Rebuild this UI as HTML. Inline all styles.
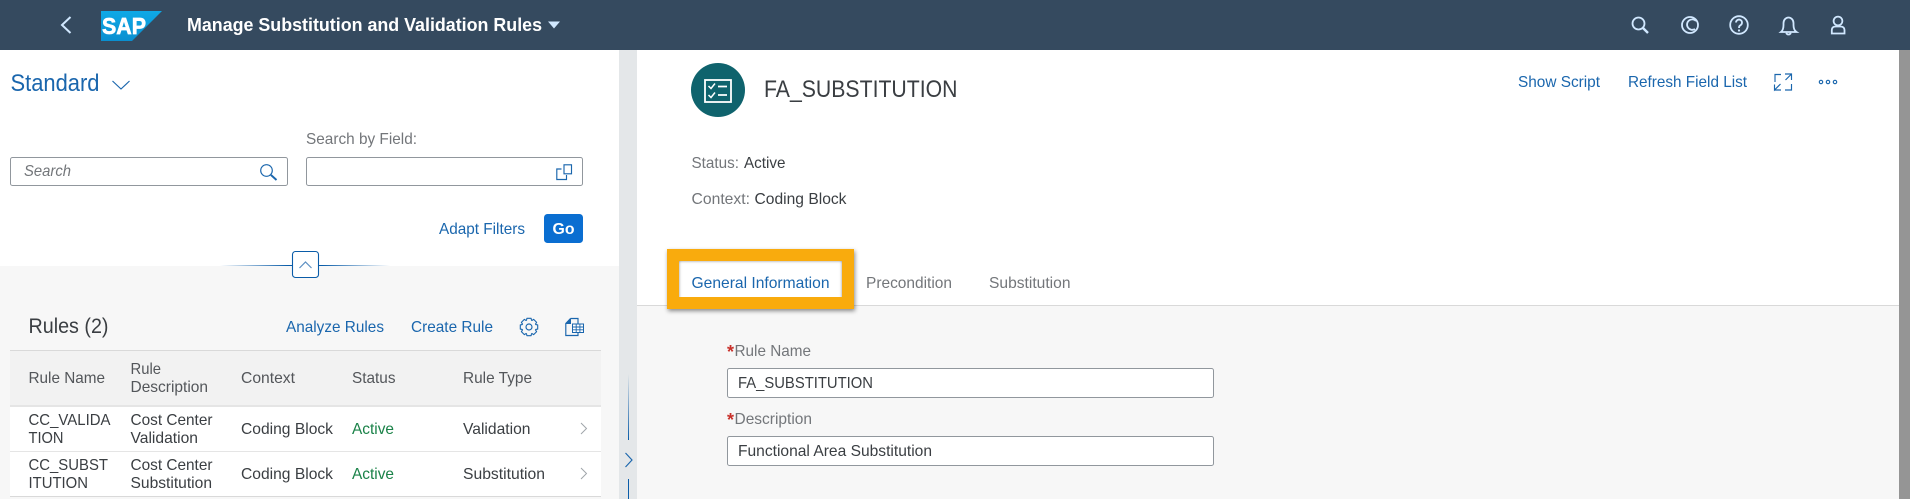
<!DOCTYPE html>
<html><head><meta charset="utf-8"><style>
html,body{margin:0;padding:0;width:1910px;height:499px;overflow:hidden;background:#fff}
svg{display:block}
text{font-family:"Liberation Sans",sans-serif;font-size:16px;fill:#3a3e42}
.l{fill:#1a66ad}.g{fill:#73767a}
.ic{fill:none;stroke:#1a66ad;stroke-width:1.15}
.hi{fill:none;stroke:#d1e8ff;stroke-width:1.8}
.inp{fill:#fff;stroke:#91979d;stroke-width:1}
</style></head><body>
<svg width="1910" height="499" viewBox="0 0 1910 499" xmlns="http://www.w3.org/2000/svg">
<defs>
<linearGradient id="lg" x1="0" x2="1" y1="0" y2="0"><stop offset="0" stop-color="#0a5ca8" stop-opacity="0"/><stop offset=".4" stop-color="#0a5ca8"/><stop offset=".6" stop-color="#0a5ca8"/><stop offset="1" stop-color="#0a5ca8" stop-opacity="0"/></linearGradient>
<linearGradient id="vg" x1="0" x2="0" y1="0" y2="1"><stop offset="0" stop-color="#0a5ca8" stop-opacity="0"/><stop offset="1" stop-color="#0a5ca8"/></linearGradient>
<linearGradient id="sp" x1="0" x2="0" y1="0" y2="1"><stop offset="0" stop-color="#0fa9e6"/><stop offset="1" stop-color="#0a8fd0"/></linearGradient>
<filter id="sh" x="-10%" y="-20%" width="120%" height="140%"><feDropShadow dx="1" dy="2" stdDeviation="2" flood-color="#000" flood-opacity=".45"/></filter>
<filter id="bl" x="-10%" y="-30%" width="120%" height="160%"><feGaussianBlur stdDeviation="1.6"/></filter>
<clipPath id="clipT"><rect x="679" y="261" width="163" height="36"/></clipPath>
</defs>

<!-- backgrounds -->
<rect x="0" y="50" width="619" height="216" fill="#fff"/>
<rect x="0" y="266" width="619" height="233" fill="#f7f7f7"/>
<rect x="619" y="50" width="18" height="449" fill="#e4e7e9"/>
<rect x="637" y="50" width="1262" height="255" fill="#fff"/>
<rect x="637" y="306" width="1262" height="193" fill="#f7f7f7"/>
<rect x="637" y="305" width="1262" height="1" fill="#d9d9d9"/>
<rect x="1899" y="50" width="11" height="449" fill="#959595"/>

<!-- shell header -->
<rect x="0" y="0" width="1910" height="50" fill="#354a5f"/>
<path d="M70.500 17 L62 25 L70.500 33" fill="none" stroke="#d1e8ff" stroke-width="2"/>
<polygon points="101,11 162,11 132,41 101,41" fill="url(#sp)"/>
<text x="102" y="34" style="font-size:23px;font-weight:bold;fill:#fff;stroke:#fff;stroke-width:.7" textLength="44" lengthAdjust="spacingAndGlyphs">SAP</text>
<text x="187" y="31" style="font-size:18px;font-weight:bold;fill:#fff" textLength="355" lengthAdjust="spacingAndGlyphs">Manage Substitution and Validation Rules</text>
<polygon points="548,21.500 560,21.500 554,28.500" fill="#d1e8ff"/>
<!-- search -->
<circle cx="1638.500" cy="23.500" r="6" class="hi"/><path d="M1643 28 L1648 33" class="hi" style="stroke-width:2.400"/>
<!-- copilot -->
<circle cx="1690" cy="25" r="8" class="hi"/><path d="M1696 21 A5.200 5.200 0 1 0 1695 29" class="hi"/>
<!-- help -->
<circle cx="1739" cy="25" r="8.800" class="hi"/>
<path d="M1736 22.500 A3 3 0 1 1 1740.500 25.200 Q1739 26 1739 28" class="hi"/><circle cx="1739" cy="30.500" r="1.100" fill="#d1e8ff"/>
<!-- bell -->
<path d="M1781 32 Q1783.500 30 1783.500 25 V23 A5 5.500 0 0 1 1793.500 23 V25 Q1793.500 30 1796.500 32 Z" class="hi"/><path d="M1786 33 Q1788.500 36 1791 33" class="hi"/>
<!-- user -->
<circle cx="1838" cy="21" r="4.400" class="hi"/><path d="M1831.800 33.500 V30 Q1831.800 26.500 1836 26.500 H1840 Q1844.500 26.500 1844.500 30 V33.500 Z" class="hi"/>

<!-- left panel -->
<text x="10.500" y="91" class="l" style="font-size:24px" textLength="89" lengthAdjust="spacingAndGlyphs">Standard</text>
<path d="M112.500 81 L121 89 L129.500 81" class="ic"/>
<text x="306" y="144" class="g" textLength="111" lengthAdjust="spacingAndGlyphs">Search by Field:</text>
<rect x="10.500" y="157.500" width="277" height="28" rx="2" class="inp"/>
<text x="24" y="176" class="g" style="font-style:italic" textLength="47" lengthAdjust="spacingAndGlyphs">Search</text>
<circle cx="266.500" cy="170.500" r="5.800" class="ic"/><path d="M271 175 L276.500 180" class="ic" style="stroke-width:1.900"/>
<rect x="306.500" y="157.500" width="276" height="28" rx="2" class="inp"/>
<path d="M561.500 169 H556.800 V179.500 H566.500 V175" class="ic"/><rect x="564" y="164.800" width="7.500" height="9" class="ic"/>
<text x="439" y="234" class="l" textLength="86" lengthAdjust="spacingAndGlyphs">Adapt Filters</text>
<rect x="544" y="214" width="39" height="29" rx="3.500" fill="#0a6ed1"/>
<text x="552.500" y="234" style="font-weight:bold;fill:#fff" textLength="22" lengthAdjust="spacingAndGlyphs">Go</text>

<!-- collapse handle -->
<rect x="220" y="265" width="170" height="1" fill="url(#lg)"/>
<rect x="292.500" y="251.500" width="26" height="26" rx="3" fill="#fff" stroke="#0a5ca8" stroke-width="1.100"/>
<path d="M299.500 268 L305.500 262 L311.500 268" fill="none" stroke="#5c8fc2" stroke-width="1.200"/>

<!-- rules toolbar -->
<text x="28.500" y="333" style="font-size:21px" textLength="80" lengthAdjust="spacingAndGlyphs">Rules (2)</text>
<text x="286" y="332" class="l" textLength="98" lengthAdjust="spacingAndGlyphs">Analyze Rules</text>
<text x="411" y="332" class="l" textLength="82" lengthAdjust="spacingAndGlyphs">Create Rule</text>
<circle cx="529" cy="327" r="3" class="ic"/>
<g transform="translate(529 327)" fill="none" stroke="#1a66ad" stroke-width="1.100" stroke-linejoin="round">
<path d="M-2.600-6.300 L-2.100-8.700 H2.100 L2.600-6.300"/>
<path d="M-2.600-6.300 L-2.100-8.700 H2.100 L2.600-6.300" transform="rotate(45)"/>
<path d="M-2.600-6.300 L-2.100-8.700 H2.100 L2.600-6.300" transform="rotate(90)"/>
<path d="M-2.600-6.300 L-2.100-8.700 H2.100 L2.600-6.300" transform="rotate(135)"/>
<path d="M-2.600-6.300 L-2.100-8.700 H2.100 L2.600-6.300" transform="rotate(180)"/>
<path d="M-2.600-6.300 L-2.100-8.700 H2.100 L2.600-6.300" transform="rotate(225)"/>
<path d="M-2.600-6.300 L-2.100-8.700 H2.100 L2.600-6.300" transform="rotate(270)"/>
<path d="M-2.600-6.300 L-2.100-8.700 H2.100 L2.600-6.300" transform="rotate(315)"/>
</g>
<path d="M570.500 318.500 H578 V323.500 M570.500 318.500 L565.800 323.500 V335.500 H578 V333" class="ic"/>
<path d="M565.800 323.500 H570.500 V318.500" fill="#1a66ad" stroke="#1a66ad" stroke-width="1"/>
<rect x="572.500" y="324" width="11" height="8.500" fill="#fff" stroke="#1a66ad" stroke-width="1"/>
<path d="M572.500 327 H583.500 M572.500 329.800 H583.500 M576.200 324 V332.500 M579.900 324 V332.500" fill="none" stroke="#1a66ad" stroke-width=".9"/>

<!-- table -->
<rect x="10" y="350" width="591" height="55" fill="#f2f2f2"/>
<rect x="10" y="350" width="591" height="1" fill="#d9d9d9"/>
<rect x="10" y="405" width="591" height="2" fill="#e5e5e5"/>
<rect x="10" y="407" width="591" height="89" fill="#fff"/>
<rect x="10" y="451" width="591" height="1" fill="#e5e5e5"/>
<rect x="10" y="496" width="591" height="1" fill="#d9d9d9"/>

<text x="28.500" y="383" textLength="76.500" lengthAdjust="spacingAndGlyphs" style="fill:#53565a">Rule Name</text>
<text x="130.500" y="374" textLength="30.500" lengthAdjust="spacingAndGlyphs" style="fill:#53565a">Rule</text>
<text x="130.500" y="392" textLength="77.500" lengthAdjust="spacingAndGlyphs" style="fill:#53565a">Description</text>
<text x="241" y="383" textLength="54" lengthAdjust="spacingAndGlyphs" style="fill:#53565a">Context</text>
<text x="352" y="383" textLength="43.500" lengthAdjust="spacingAndGlyphs" style="fill:#53565a">Status</text>
<text x="463" y="383" textLength="69" lengthAdjust="spacingAndGlyphs" style="fill:#53565a">Rule Type</text>

<text x="28.500" y="425" textLength="82" lengthAdjust="spacingAndGlyphs">CC_VALIDA</text>
<text x="28.500" y="443" textLength="35" lengthAdjust="spacingAndGlyphs">TION</text>
<text x="130.500" y="425" textLength="82" lengthAdjust="spacingAndGlyphs">Cost Center</text>
<text x="130.500" y="443" textLength="67.500" lengthAdjust="spacingAndGlyphs">Validation</text>
<text x="241" y="434" textLength="92" lengthAdjust="spacingAndGlyphs">Coding Block</text>
<text x="352" y="434" style="fill:#1a8248" textLength="42" lengthAdjust="spacingAndGlyphs">Active</text>
<text x="463" y="434" textLength="67.500" lengthAdjust="spacingAndGlyphs">Validation</text>
<path d="M581 423 L586.500 428.500 L581 434" fill="none" stroke="#a0a5aa" stroke-width="1"/>

<text x="28.500" y="470" textLength="79.500" lengthAdjust="spacingAndGlyphs">CC_SUBST</text>
<text x="28.500" y="488" textLength="59.500" lengthAdjust="spacingAndGlyphs">ITUTION</text>
<text x="130.500" y="470" textLength="82" lengthAdjust="spacingAndGlyphs">Cost Center</text>
<text x="130.500" y="488" textLength="81.500" lengthAdjust="spacingAndGlyphs">Substitution</text>
<text x="241" y="479" textLength="92" lengthAdjust="spacingAndGlyphs">Coding Block</text>
<text x="352" y="479" style="fill:#1a8248" textLength="42" lengthAdjust="spacingAndGlyphs">Active</text>
<text x="463" y="479" textLength="82" lengthAdjust="spacingAndGlyphs">Substitution</text>
<path d="M581 468 L586.500 473.500 L581 479" fill="none" stroke="#a0a5aa" stroke-width="1"/>

<!-- divider -->
<rect x="628" y="374" width="1" height="66" fill="url(#vg)"/>
<path d="M625.500 453 L632 460 L625.500 467" class="ic"/>
<rect x="628" y="479" width="1" height="20" fill="#0a5ca8"/>

<!-- right header -->
<circle cx="718" cy="90" r="27" fill="#0f636d"/>
<rect x="705" y="80" width="26" height="22" fill="none" stroke="#fff" stroke-width="1.800"/>
<path d="M708.500 86 L711 88.500 L715 83.500 M708.500 95 L711 97.500 L715 92.500" fill="none" stroke="#fff" stroke-width="1.500"/>
<path d="M718 86.500 H727 M718 95 H727" fill="none" stroke="#fff" stroke-width="1.800"/>
<text x="764" y="97" style="font-size:24px" textLength="193.500" lengthAdjust="spacingAndGlyphs">FA_SUBSTITUTION</text>
<text x="691.500" y="168" class="g" textLength="47.500" lengthAdjust="spacingAndGlyphs">Status:</text>
<text x="744" y="168" textLength="41.500" lengthAdjust="spacingAndGlyphs">Active</text>
<text x="691.500" y="204" class="g" textLength="58.500" lengthAdjust="spacingAndGlyphs">Context:</text>
<text x="754.500" y="204" textLength="92" lengthAdjust="spacingAndGlyphs">Coding Block</text>

<text x="1518" y="87" class="l" textLength="82" lengthAdjust="spacingAndGlyphs">Show Script</text>
<text x="1628" y="87" class="l" textLength="119" lengthAdjust="spacingAndGlyphs">Refresh Field List</text>
<path d="M1775 82 V74.500 H1781 M1785 74 H1791.500 V80 M1791.500 74 L1785.500 80 M1791.500 84 V90 H1785 M1774.500 90 H1781 V90 M1774.500 84.500 V90 L1780.500 84" class="ic"/>
<circle cx="1821" cy="82" r="1.700" class="ic"/><circle cx="1828" cy="82" r="1.700" class="ic"/><circle cx="1835" cy="82" r="1.700" class="ic"/>

<!-- tabs with highlight -->
<rect x="667" y="249" width="187" height="60" fill="#f9ab07" filter="url(#sh)"/>
<rect x="679" y="261" width="163" height="36" fill="#fff"/>
<g clip-path="url(#clipT)">
<rect x="677" y="259" width="167" height="60" fill="none" stroke="#000" stroke-opacity=".6" stroke-width="3" filter="url(#bl)"/>
</g>
<text x="691.500" y="288" class="l" textLength="138" lengthAdjust="spacingAndGlyphs">General Information</text>
<text x="866" y="288" class="g" textLength="86" lengthAdjust="spacingAndGlyphs">Precondition</text>
<text x="989" y="288" class="g" textLength="81.500" lengthAdjust="spacingAndGlyphs">Substitution</text>

<!-- form -->
<text x="727" y="358" style="fill:#c8302a;font-weight:bold;font-size:18px">*</text>
<text x="734.500" y="356" class="g" textLength="76.500" lengthAdjust="spacingAndGlyphs">Rule Name</text>
<rect x="727.500" y="368.500" width="486" height="29" rx="2" class="inp"/>
<text x="738" y="388" textLength="135" lengthAdjust="spacingAndGlyphs">FA_SUBSTITUTION</text>
<text x="727" y="426" style="fill:#c8302a;font-weight:bold;font-size:18px">*</text>
<text x="734.500" y="424" class="g" textLength="77.500" lengthAdjust="spacingAndGlyphs">Description</text>
<rect x="727.500" y="436.500" width="486" height="29" rx="2" class="inp"/>
<text x="738" y="456" textLength="194" lengthAdjust="spacingAndGlyphs">Functional Area Substitution</text>
</svg>
</body></html>
